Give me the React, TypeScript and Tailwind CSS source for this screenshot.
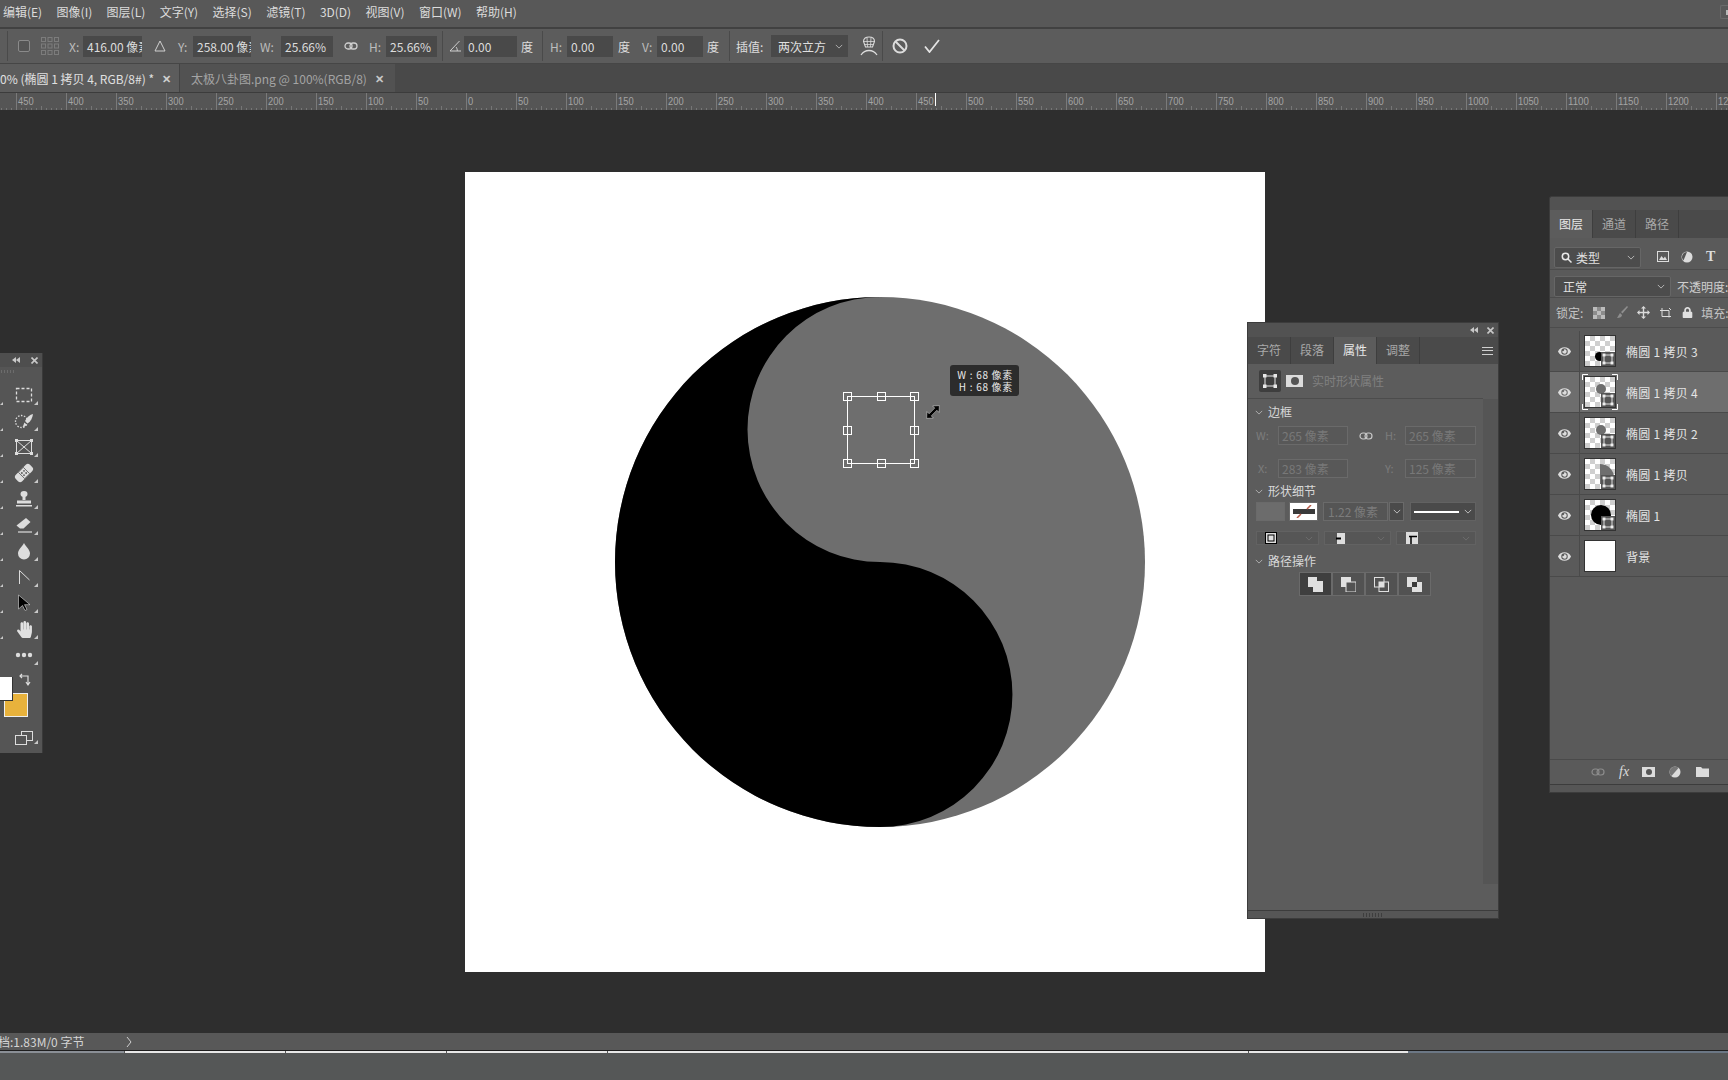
import React from "react";
import { FaEye, FaHandPaper, FaLock } from "react-icons/fa";

const menus = ["编辑(E)", "图像(I)", "图层(L)", "文字(Y)", "选择(S)", "滤镜(T)", "3D(D)", "视图(V)", "窗口(W)", "帮助(H)"];

function Chev({ className = "" }: { className?: string }) {
  return (
    <svg viewBox="0 0 10 6" className={"w-[8px] h-[5px] shrink-0 " + className} fill="none" stroke="currentColor" strokeWidth="1.2">
      <path d="M1 1l4 4 4-4" />
    </svg>
  );
}

function OptInput({ text, className }: { text: string; className: string }) {
  return (
    <div className={"h-[21px] shrink-0 bg-[#494949] text-[#dcdcdc] text-[12px] leading-[21px] pl-[4px] overflow-hidden whitespace-nowrap " + className}>
      {text}
    </div>
  );
}

function OptLabel({ text, className }: { text: string; className: string }) {
  return <div className={"shrink-0 text-[#bdbdbd] text-[12px] leading-[21px] whitespace-nowrap " + className}>{text}</div>;
}

function Sep({ className }: { className: string }) {
  return <div className={"w-px h-[30px] shrink-0 bg-[#4a4a4a] " + className} />;
}

function Ruler() {
  const minor: React.ReactNode[] = [];
  for (let x = 466 - 480; x < 1728; x += 5) {
    const d = ((x - 466) % 50 + 50) % 50;
    if (d === 0) continue;
    const h = d === 25 ? 4 : 2;
    minor.push(<line key={x} x1={x + 0.5} x2={x + 0.5} y1={17 - h} y2={17} stroke="#767676" strokeWidth="1" />);
  }
  const majors: React.ReactNode[] = [];
  for (let n = -450; n <= 1250; n += 50) {
    const x = 466 + n;
    majors.push(
      <g key={n}>
        <line x1={x + 0.5} x2={x + 0.5} y1={0} y2={17} stroke="#7a7a7a" strokeWidth="1" />
        <text x={x + 2} y={12} fontSize="10" fill="#a4a4a4" fontFamily="Liberation Sans, sans-serif" textLength={String(Math.abs(n)).length * 5.2} lengthAdjust="spacingAndGlyphs">
          {Math.abs(n)}
        </text>
      </g>
    );
  }
  return (
    <svg width="1728" height="17" className="block">
      {minor}
      {majors}
      <line x1="935.5" x2="935.5" y1="0" y2="13" stroke="#fff" strokeWidth="1" />
    </svg>
  );
}

function Tiny() {
  return <span className="absolute right-[4px] bottom-[3px] w-0 h-0 border-l-[4px] border-l-transparent border-b-[4px] border-b-[#c8c8c8]" />;
}

function LeftTiny() {
  return <span className="absolute left-0 bottom-[3px] w-0 h-0 border-l-[3px] border-l-transparent border-b-[3px] border-b-[#c8c8c8]" />;
}

const toolSvg: React.ReactNode[] = [
  <svg key="m" width="18" height="16" viewBox="0 0 18 16" fill="none" stroke="#ddd" strokeWidth="1.3" strokeDasharray="3 2"><rect x="1.5" y="1.5" width="15" height="13" /></svg>,
  <svg key="l" width="20" height="16" viewBox="0 0 20 16" fill="none"><circle cx="7.5" cy="8.5" r="6" stroke="#ddd" strokeWidth="1.3" strokeDasharray="1.5 1.5" /><path d="M19 1c-3 .5-6 3-8 7l2.500 2.500c3.500-2 5-6 5.500-9.500z" fill="#ddd" /><path d="M10.500 9.500l2 2c-.5 1.500-2 2.500-4 2.500 1-1 1-3 2-4.500z" fill="#ddd" /></svg>,
  <svg key="f" width="18" height="16" viewBox="0 0 18 16" fill="none" stroke="#ddd" strokeWidth="1"><rect x="1.500" y="1.500" width="15" height="13" /><path d="M1.500 1.500l15 13M16.500 1.500l-15 13" /><rect x="0.500" y="0.500" width="2" height="2" fill="#ddd" /><rect x="15.500" y="0.500" width="2" height="2" fill="#ddd" /><rect x="0.500" y="13.500" width="2" height="2" fill="#ddd" /><rect x="15.500" y="13.500" width="2" height="2" fill="#ddd" /></svg>,
  <svg key="b" width="20" height="20" viewBox="0 0 20 20"><g transform="rotate(-45 10 10)"><rect x="0" y="5.500" width="20" height="9" rx="3" fill="#ddd" /><rect x="6.500" y="5.500" width="7" height="9" fill="#ddd" stroke="#5a5a5a" strokeWidth="0.8" /><circle cx="8.500" cy="8.500" r="0.900" fill="#5a5a5a" /><circle cx="11.500" cy="8.500" r="0.900" fill="#5a5a5a" /><circle cx="8.500" cy="11.500" r="0.900" fill="#5a5a5a" /><circle cx="11.500" cy="11.500" r="0.900" fill="#5a5a5a" /></g></svg>,
  <svg key="s" width="18" height="18" viewBox="0 0 18 18" fill="#ddd"><ellipse cx="9" cy="4" rx="3.500" ry="3" /><rect x="7.500" y="6" width="3" height="4" /><path d="M2 10.500h14v3H2z" /><rect x="1" y="15" width="16" height="1.500" /></svg>,
  <svg key="e" width="18" height="16" viewBox="0 0 18 16"><path d="M11 1l4.500 4-7 6.500H5L1.500 8.500z" fill="#ddd" /><path d="M3 15h14" stroke="#ddd" strokeWidth="1.200" /></svg>,
  <svg key="d" width="14" height="18" viewBox="0 0 14 18"><path d="M7 1c1.500 3.500 6 6.500 6 10.500A6 6 0 0 1 1 11.500C1 7.500 5.500 4.500 7 1z" fill="#ddd" /></svg>,
  <svg key="p" width="14" height="16" viewBox="0 0 14 16" fill="none" stroke="#ddd" strokeWidth="1"><path d="M2.500 15V1.500L12.500 11" /></svg>,
  <svg key="a" width="14" height="18" viewBox="0 0 14 18"><path d="M1.500 1v14l4-3.500 2.500 5 2-1-2.500-4.800h5.500z" fill="#000" stroke="#d8d8d8" strokeWidth="0.600" /></svg>,
  <FaHandPaper key="h" size={17} color="#e0e0e0" />,
  <svg key="o" width="18" height="6" viewBox="0 0 18 6" fill="#ddd"><circle cx="3" cy="3" r="2.200" /><circle cx="9" cy="3" r="2.200" /><circle cx="15" cy="3" r="2.200" /></svg>,
];

function Thumb({ children, plain, selected }: { children?: React.ReactNode; plain?: boolean; selected?: boolean }) {
  return (
    <div className="relative w-[32px] h-[32px] shrink-0 ml-[4px]">
      <div className={"absolute inset-0 border border-[#333] overflow-hidden " + (plain ? "bg-white" : "bg-[repeating-conic-gradient(#cfcfcf_0_25%,#ffffff_0_50%)] bg-[length:10px_10px]")}>
        {children}
        {!plain && (
          <div className="absolute right-0 bottom-0 w-[14px] h-[14px] bg-[#555] flex items-center justify-center">
            <svg width="12" height="12" viewBox="0 0 12 12" fill="none" stroke="#eee" strokeWidth="0.9">
              <rect x="2" y="2" width="8" height="8" />
              <rect x="1" y="1" width="2" height="2" fill="#eee" />
              <rect x="9" y="1" width="2" height="2" fill="#eee" />
              <rect x="1" y="9" width="2" height="2" fill="#eee" />
              <rect x="9" y="9" width="2" height="2" fill="#eee" />
            </svg>
          </div>
        )}
      </div>
      {selected && (
        <svg width="36" height="36" className="absolute -left-[2px] -top-[2px]" fill="none" stroke="#fff" strokeWidth="1">
          <path d="M.5 6V.5H6M30 .5h5.500V6M35.500 30v5.500H30M6 35.500H.5V30" />
        </svg>
      )}
    </div>
  );
}

function LayerRow({ name, selected, children, plain }: { name: string; selected?: boolean; children?: React.ReactNode; plain?: boolean }) {
  return (
    <div className={"flex items-center h-[41px] border-b border-[#4a4a4a] " + (selected ? "bg-[#6e6e6e]" : "")}>
      <div className="w-[30px] h-full flex items-center justify-center border-r border-[#4a4a4a] shrink-0">
        <FaEye size={13} color="#dcdcdc" />
      </div>
      <Thumb plain={plain} selected={selected}>{children}</Thumb>
      <div className="ml-[10px] pt-[1px] text-[12px] text-[#e4e4e4] whitespace-pre tracking-[0.3px]">{name}</div>
    </div>
  );
}

function TabStrip({ tabs, active, h }: { tabs: string[]; active: number; h: string }) {
  return (
    <div className={"flex items-stretch bg-[#4a4a4a] " + h}>
      {tabs.map((t, i) => (
        <div key={t} className={"w-[43px] pb-[1px] flex items-center justify-center text-[12px] border-r border-[#3e3e3e] " + (i === active ? "bg-[#5c5c5c] text-[#e8e8e8]" : "text-[#a8a8a8]")}>
          {t}
        </div>
      ))}
    </div>
  );
}

function Section({ text, className }: { text: string; className: string }) {
  return (
    <div className={"flex items-center h-[16px] text-[12px] text-[#d8d8d8] pl-[7px] " + className}>
      <Chev className="text-[#b0b0b0]" />
      <span className="ml-[5px]">{text}</span>
    </div>
  );
}

function DisInput({ label, val, labelCls, inpCls }: { label: string; val: string; labelCls: string; inpCls: string }) {
  return (
    <>
      <div className={"text-[11px] text-[#7c7c7c] leading-[19px] shrink-0 " + labelCls}>{label}</div>
      <div className={"h-[19px] shrink-0 border border-[#6a6a6a] bg-[#585858] text-[#787878] text-[12px] leading-[17px] pl-[3px] whitespace-nowrap " + inpCls}>{val}</div>
    </>
  );
}

function MiniHeader() {
  return (
    <div className="h-[14px] bg-[#525252] flex items-center justify-end pr-[4px] gap-[9px] text-[#c8c8c8]">
      <svg width="8" height="6" viewBox="0 0 8 6" fill="currentColor"><path d="M4 0v6L0 3zM8 0v6L4 3z" /></svg>
      <svg width="7" height="7" viewBox="0 0 7 7" stroke="currentColor" strokeWidth="1.600"><path d="M.5.5l6 6M6.500.5l-6 6" /></svg>
    </div>
  );
}

function PathBtn({ mode, active }: { mode: number; active?: boolean }) {
  return (
    <div className={"w-[33px] h-[24px] border border-[#6a6a6a] flex items-center justify-center " + (active ? "bg-[#3f3f3f]" : "bg-[#525252]")}>
      <svg width="15" height="15" viewBox="0 0 15 15">
        {mode === 0 && <path d="M0 0h9v4h6v11H5v-5H0z" fill="#e0e0e0" />}
        {mode === 1 && (<><rect x="0" y="0" width="10" height="10" fill="#e0e0e0" /><rect x="5" y="5" width="10" height="10" fill="#525252" stroke="#e0e0e0" /></>)}
        {mode === 2 && (<><rect x="0.500" y="0.500" width="9.500" height="9.500" fill="none" stroke="#e0e0e0" /><rect x="5" y="5" width="9.500" height="9.500" fill="none" stroke="#e0e0e0" /><rect x="5" y="5" width="5" height="5" fill="#e0e0e0" /></>)}
        {mode === 3 && (<><path d="M0 0h10v5h5v10H5v-5H0z" fill="#e0e0e0" /><rect x="5" y="5" width="5" height="5" fill="#3a3a3a" /></>)}
      </svg>
    </div>
  );
}

function Handle({ x, y }: { x: number; y: number }) {
  return <rect x={x - 3.5} y={y - 3.5} width="8" height="8" fill="none" stroke="#fff" strokeWidth="1" />;
}

export default function App() {
  return (
    <div className="w-[1728px] h-[1080px] overflow-hidden flex flex-col bg-[#2e2e2e] font-['Noto_Sans_CJK_SC',sans-serif] select-none">
      {/* menu */}
      <div className="h-[29px] shrink-0 bg-[#585858] border-b-2 border-[#414141] flex items-center pl-[3px] pb-[3px] gap-[14.4px] text-[12px] text-[#dcdcdc] whitespace-nowrap">
        {menus.map((m) => (
          <span key={m}>{m}</span>
        ))}
        <div className="ml-auto w-[8px] h-[14px] border-l border-y border-[#6a6a6a] rounded-l-[2px] flex items-center justify-end">
          <div className="w-[2px] h-[5px] bg-[#b8b8b8]" />
        </div>
      </div>

      {/* options */}
      <div className="h-[35px] shrink-0 bg-[#5c5c5c] flex items-center border-b border-[#464646]">
        <Sep className="ml-[7px]" />
        <div className="ml-[10px] w-[12px] h-[12px] border border-[#8a8a8a] rounded-[2px] shrink-0 bg-[#555]" />
        <svg width="18" height="18" viewBox="0 0 18 18" className="ml-[11px] shrink-0" fill="none" stroke="#7c7c7c" strokeWidth="1">
          {[0, 6.5, 13].map((x) => [0, 6.5, 13].map((y) => <rect key={x + "-" + y} x={x + 0.5} y={y + 0.5} width="4" height="4" />))}
        </svg>
        <OptLabel text="X:" className="ml-[10px] w-[14px]" />
        <OptInput text="416.00 像素" className="w-[59px]" />
        <svg width="12" height="12" viewBox="0 0 12 12" className="ml-[12px] shrink-0" fill="none" stroke="#d0d0d0" strokeWidth="1"><path d="M6 1l5 10H1z" /></svg>
        <OptLabel text="Y:" className="ml-[12px] w-[15px]" />
        <OptInput text="258.00 像素" className="w-[58px]" />
        <OptLabel text="W:" className="ml-[9px] w-[21px]" />
        <OptInput text="25.66%" className="w-[52px]" />
        <svg width="14" height="10" viewBox="0 0 14 10" className="ml-[11px] shrink-0" fill="none" stroke="#d0d0d0" strokeWidth="1.300"><rect x="1" y="2" width="7" height="6" rx="3" /><rect x="6" y="2" width="7" height="6" rx="3" /></svg>
        <OptLabel text="H:" className="ml-[11px] w-[17px]" />
        <OptInput text="25.66%" className="w-[51px]" />
        <Sep className="ml-[5px]" />
        <svg width="12" height="12" viewBox="0 0 12 12" className="ml-[6px] shrink-0" fill="none" stroke="#d0d0d0" strokeWidth="1"><path d="M10.500 1L1 11h11M7 7c1 1 1.300 2.500 1.300 4" /></svg>
        <OptInput text="0.00" className="ml-[3px] w-[53px]" />
        <OptLabel text="度" className="ml-[4px] w-[14px] text-[#dcdcdc]" />
        <Sep className="ml-[7px]" />
        <OptLabel text="H:" className="ml-[7px] w-[17px]" />
        <OptInput text="0.00" className="w-[46px]" />
        <OptLabel text="度" className="ml-[5px] w-[14px] text-[#dcdcdc]" />
        <OptLabel text="V:" className="ml-[10px] w-[15px]" />
        <OptInput text="0.00" className="w-[46px]" />
        <OptLabel text="度" className="ml-[4px] w-[14px] text-[#dcdcdc]" />
        <Sep className="ml-[8px]" />
        <OptLabel text="插值:" className="ml-[6px] w-[35px] text-[#dcdcdc]" />
        <div className="w-[77px] h-[22px] shrink-0 bg-[#494949] flex items-center justify-between pl-[7px] pr-[5px] text-[12px] text-[#e0e0e0]">
          <span className="pt-[1px]">两次立方</span>
          <Chev className="text-[#b0b0b0]" />
        </div>
        <svg width="18" height="20" viewBox="0 0 18 20" className="ml-[12px] shrink-0" fill="none" stroke="#dcdcdc" strokeWidth="1.100">
          <path d="M3.500 5.500C3.500 2 6 1 9 1s5.500 1 5.500 4.500L12.500 11h-7z" />
          <path d="M3.500 5.500h11M4.500 8.500h9M7 1.500L7.500 11M11 1.500L10.500 11" strokeWidth="0.800" />
          <path d="M1 19c2-3 5-4.500 8-4.500s6 1.500 8 4.500" strokeWidth="1.300" />
        </svg>
        <Sep className="ml-[4px]" />
        <svg width="16" height="16" viewBox="0 0 16 16" className="ml-[9px] shrink-0" fill="none" stroke="#dcdcdc" strokeWidth="2"><circle cx="8" cy="8" r="6.500" /><path d="M3.500 3.500l9 9" /></svg>
        <svg width="16" height="14" viewBox="0 0 16 14" className="ml-[16px] shrink-0" fill="none" stroke="#e4e4e4" strokeWidth="1.800"><path d="M1 7.500L5.500 13 15 1" /></svg>
      </div>

      {/* tabs */}
      <div className="h-[29px] shrink-0 bg-[#494949] flex items-stretch text-[12px] whitespace-nowrap border-b border-[#3c3c3c]">
        <div className="w-[179px] bg-[#5c5c5c] flex items-center justify-end pr-[8px] pt-[1px] overflow-hidden text-[#e0e0e0]">
          <span>0% (椭圆 1 拷贝 4, RGB/8#) *</span>
          <span className="ml-[8px] text-[#cfcfcf] text-[11px] font-bold">✕</span>
        </div>
        <div className="w-[216px] bg-[#525252] flex items-center pl-[11px] pt-[1px] text-[#a4a4a4] border-l border-[#444]">
          <span>太极八卦图.png @ 100%(RGB/8)</span>
          <span className="ml-[8px] text-[#c8c8c8] text-[11px] font-bold">✕</span>
        </div>
      </div>

      {/* ruler */}
      <div className="h-[17px] shrink-0 bg-[#555555] overflow-hidden">
        <Ruler />
      </div>

      {/* workspace */}
      <div className="relative h-[923px] shrink-0 bg-[#2e2e2e]">
        <div className="relative w-[800px] h-[800px] ml-[465px] mt-[62px] bg-white">
          <svg width="800" height="800" viewBox="0 0 800 800" className="block">
            <circle cx="415" cy="390" r="265" fill="#6e6e6e" />
            <path d="M415 125A132.500 132.500 0 0 0 415 390A132.500 132.500 0 0 1 415 655A265 265 0 0 1 415 125Z" fill="#000" />
            <rect x="382.500" y="224.500" width="67" height="67" fill="none" stroke="#fff" strokeWidth="1" />
            <Handle x={382} y={224} />
            <Handle x={416} y={224} />
            <Handle x={449} y={224} />
            <Handle x={382} y={258} />
            <Handle x={449} y={258} />
            <Handle x={382} y={291} />
            <Handle x={416} y={291} />
            <Handle x={449} y={291} />
            <g transform="translate(468 240) rotate(-45)">
              <path d="M-9 0l5-4.500v3h8v-3L9 0 4 4.500v-3h-8v3z" fill="#000" stroke="#fff" strokeWidth="0.400" />
            </g>
          </svg>
          <div className="absolute left-[485px] top-[193px] w-[69px] h-[31px] rounded-[3px] bg-[#2c2c2c] text-[#e8e8e8] text-[10px] leading-[12px] flex flex-col items-end justify-center pr-[6px] whitespace-pre tracking-[0.7px]">
            <div>W : 68 像素</div>
            <div>H : 68 像素</div>
          </div>
        </div>

        {/* tool panel */}
        <div className="absolute left-0 top-[243px] w-[43px] h-[400px] bg-[#555] border-r border-[#3a3a3a] flex flex-col">
          <div className="h-[14px] bg-[#4e4e4e] flex items-center justify-end pr-[4px] gap-[11px] text-[#c8c8c8] shrink-0">
            <svg width="8" height="6" viewBox="0 0 8 6" fill="currentColor"><path d="M4 0v6L0 3zM8 0v6L4 3z" /></svg>
            <svg width="7" height="7" viewBox="0 0 7 7" stroke="currentColor" strokeWidth="1.600"><path d="M.5.5l6 6M6.500.5l-6 6" /></svg>
          </div>
          <div className="h-[15px] shrink-0 pt-[3px] pl-[1px]">
            <div className="w-[15px] h-[3px] bg-[repeating-linear-gradient(90deg,#6c6c6c_0_1px,transparent_1px_3px)]" />
          </div>
          {toolSvg.map((t, i) => (
            <div key={i} className="relative h-[26px] shrink-0 flex items-center justify-center pl-[6px]">
              {t}
              <Tiny />
              {i < 10 && <LeftTiny />}
            </div>
          ))}
          <div className="relative flex-1">
            <div className="absolute left-[4px] top-[25px] w-[24px] h-[24px] bg-[#e8b23c] border border-[#eee]" />
            <div className="absolute left-0 top-[9px] w-[13px] h-[24px] bg-white border-r border-b border-[#333]" />
            <svg width="12" height="14" viewBox="0 0 12 14" className="absolute left-[19px] top-[5px]" fill="none" stroke="#ddd" strokeWidth="1.200">
              <path d="M3 1L1 3l2 2M1 3h8v8M7 9l2 3 2-3" />
            </svg>
            <svg width="18" height="14" viewBox="0 0 18 14" className="absolute left-[15px] top-[63px]" fill="none" stroke="#ddd" strokeWidth="1">
              <rect x="6.500" y="0.500" width="11" height="9" />
              <rect x="0.500" y="4.500" width="11" height="9" fill="#555" />
            </svg>
            <span className="absolute right-[4px] bottom-[9px] w-0 h-0 border-l-[4px] border-l-transparent border-b-[4px] border-b-[#c8c8c8]" />
          </div>
        </div>

        {/* properties panel */}
        <div className="absolute left-[1247px] top-[212px] w-[252px] h-[597px] bg-[#5c5c5c] border border-[#3c3c3c] flex flex-col overflow-hidden">
          <MiniHeader />
          <div className="relative">
            <TabStrip tabs={["字符", "段落", "属性", "调整"]} active={2} h="h-[27px]" />
            <div className="absolute right-[5px] top-[10px] w-[11px] h-[8px] border-y border-[#d0d0d0] after:block after:h-px after:mt-[2px] after:bg-[#d0d0d0]" />
          </div>
          <div className="flex-1 min-h-0 flex">
            <div className="w-[235px] shrink-0 flex flex-col">
              <div className="h-[34px] shrink-0 flex items-center pl-[11px]">
                <div className="w-[22px] h-[22px] bg-[#3e3e3e] flex items-center justify-center rounded-[2px]">
                  <svg width="14" height="14" viewBox="0 0 14 14" fill="none" stroke="#e8e8e8" strokeWidth="1"><rect x="2" y="2" width="10" height="10" /><rect x="0.500" y="0.500" width="2.500" height="2.500" fill="#e8e8e8" /><rect x="11" y="0.500" width="2.500" height="2.500" fill="#e8e8e8" /><rect x="0.500" y="11" width="2.500" height="2.500" fill="#e8e8e8" /><rect x="11" y="11" width="2.500" height="2.500" fill="#e8e8e8" /></svg>
                </div>
                <div className="ml-[5px] w-[17px] h-[12px] bg-[#dcdcdc] flex items-center justify-center">
                  <div className="w-[8px] h-[8px] rounded-full bg-[#555]" />
                </div>
                <div className="ml-[9px] text-[12px] text-[#808080]">实时形状属性</div>
              </div>
              <div className="h-px shrink-0 bg-[#4c4c4c]" />
              <Section text="边框" className="mt-[5px]" />
              <div className="flex mt-[6px] h-[19px]">
                <DisInput label="W:" val="265 像素" labelCls="ml-[8px] w-[22px]" inpCls="w-[70px]" />
                <svg width="14" height="10" viewBox="0 0 14 10" className="ml-[11px] mt-[5px] shrink-0" fill="none" stroke="#c8c8c8" strokeWidth="1.200"><rect x="1" y="2" width="7" height="6" rx="3" /><rect x="6" y="2" width="7" height="6" rx="3" /></svg>
                <DisInput label="H:" val="265 像素" labelCls="ml-[12px] w-[20px]" inpCls="w-[71px]" />
              </div>
              <div className="flex mt-[14px] h-[19px]">
                <DisInput label="X:" val="283 像素" labelCls="ml-[10px] w-[20px]" inpCls="w-[70px]" />
                <DisInput label="Y:" val="125 像素" labelCls="ml-[37px] w-[20px]" inpCls="w-[71px]" />
              </div>
              <Section text="形状细节" className="mt-[5px]" />
              <div className="flex mt-[3px] h-[19px]">
                <div className="ml-[8px] w-[29px] h-[19px] border border-[#6a6a6a] bg-[#6c6c6c]" />
                <div className="ml-[4px] w-[29px] h-[19px] border border-[#6a6a6a] bg-white flex items-center justify-center">
                  <svg width="22" height="13" viewBox="0 0 22 13"><rect y="4" width="22" height="5" fill="#3a3a3a" /><path d="M14 4l4-4M4 13l4-4" stroke="#b85c4a" strokeWidth="1.500" /></svg>
                </div>
                <div className="ml-[5px] w-[65px] h-[19px] bg-[#555] border border-[#6a6a6a] text-[#7c7c7c] text-[12px] leading-[17px] pl-[4px]">1.22 像素</div>
                <div className="ml-[1px] w-[15px] h-[19px] bg-[#4a4a4a] border border-[#6a6a6a] flex items-center justify-center text-[#c0c0c0]"><Chev /></div>
                <div className="ml-[6px] w-[66px] h-[19px] bg-[#4a4a4a] border border-[#626262] flex items-center pl-[3px] pr-[3px] text-[#c0c0c0]">
                  <div className="w-[47px] h-[2px] bg-white" />
                  <Chev className="ml-[5px]" />
                </div>
              </div>
              <div className="flex mt-[10px] h-[14px]">
                <div className="ml-[8px] w-[63px] h-[14px] bg-[#565656] border border-[#626262] flex items-center pl-[8px] pr-[5px] justify-between text-[#6e6e6e]">
                  <svg width="12" height="12" viewBox="0 0 12 12" fill="none" stroke="#000" strokeWidth="1"><rect x="0.500" y="0.500" width="11" height="11" fill="#ddd" /><rect x="3" y="3" width="6" height="6" fill="#ddd" /></svg>
                  <Chev />
                </div>
                <div className="ml-[5px] w-[67px] h-[14px] bg-[#565656] border border-[#626262] flex items-center pl-[11px] pr-[5px] justify-between text-[#6e6e6e]">
                  <svg width="9" height="11" viewBox="0 0 9 11"><rect x="1" y="0" width="8" height="11" fill="#ddd" /><path d="M0 5.500h5" stroke="#000" strokeWidth="2" /></svg>
                  <Chev />
                </div>
                <div className="ml-[5px] w-[80px] h-[14px] bg-[#565656] border border-[#626262] flex items-center pl-[9px] pr-[5px] justify-between text-[#6e6e6e]">
                  <svg width="12" height="12" viewBox="0 0 12 12"><rect width="12" height="12" fill="#ddd" /><path d="M3 4.500h8M5 4.500V12" stroke="#000" strokeWidth="1.500" /></svg>
                  <Chev />
                </div>
              </div>
              <Section text="路径操作" className="mt-[8px]" />
              <div className="flex mt-[3px] ml-[51px]">
                <PathBtn mode={0} active />
                <PathBtn mode={1} />
                <PathBtn mode={2} />
                <PathBtn mode={3} />
              </div>
            </div>
            <div className="w-[15px] shrink-0 mt-[35px] mb-[26px] bg-[#555555]" />
          </div>
          <div className="h-[8px] shrink-0 bg-[#565656] border-t border-[#3c3c3c] flex justify-center items-center">
            <div className="w-[20px] h-[4px] bg-[repeating-linear-gradient(90deg,#3e3e3e_0_1px,transparent_1px_3px)]" />
          </div>
        </div>

        {/* layers panel */}
        <div className="absolute left-[1549px] top-[86px] w-[179px] h-[597px] bg-[#5a5a5a] border-l border-t border-b border-[#3c3c3c] rounded-tl-[3px] flex flex-col overflow-hidden">
          <div className="h-[13px] shrink-0 bg-[#525252]" />
          <TabStrip tabs={["图层", "通道", "路径"]} active={0} h="h-[28px] shrink-0" />
          <div className="h-[32px] shrink-0 flex items-start pt-[9px] pl-[4px] border-b border-[#4c4c4c] relative">
            <div className="w-[87px] h-[21px] rounded-[2px] bg-[#4c4c4c] border border-[#666] flex items-center pl-[6px] pr-[5px] text-[12px] text-[#e0e0e0]">
              <svg width="11" height="11" viewBox="0 0 11 11" fill="none" stroke="#e8e8e8" strokeWidth="1.500"><circle cx="4.500" cy="4.500" r="3.200" /><path d="M7 7l3.500 3.500" /></svg>
              <span className="ml-[4px] flex-1">类型</span>
              <Chev className="text-[#b8b8b8]" />
            </div>
            <svg width="12" height="11" viewBox="0 0 12 11" className="ml-[16px] mt-[4px] shrink-0"><rect x="0.500" y="0.500" width="11" height="10" fill="none" stroke="#dcdcdc" /><path d="M2 9l2.500-4 2 2.500 1.500-2L10 9z" fill="#dcdcdc" /></svg>
            <svg width="12" height="12" viewBox="0 0 12 12" className="ml-[12px] mt-[4px] shrink-0"><circle cx="6" cy="6" r="5.500" fill="#dcdcdc" /><path d="M6 1a5 5 0 0 0-3.500 8.500z" fill="#555" /></svg>
            <span className="ml-[13px] mt-[1px] font-['Liberation_Serif',serif] font-bold text-[14px] leading-[18px] text-[#dcdcdc]">T</span>
          </div>
          <div className="h-[28px] shrink-0 flex items-start pt-[6px] pl-[4px] border-b border-[#4c4c4c] whitespace-nowrap">
            <div className="w-[117px] h-[21px] shrink-0 rounded-[2px] bg-[#4c4c4c] border border-[#666] flex items-center pl-[8px] pr-[5px] justify-between text-[12px] text-[#e0e0e0]">
              <span>正常</span>
              <Chev className="text-[#b8b8b8]" />
            </div>
            <span className="ml-[6px] text-[12px] leading-[21px] text-[#cfcfcf]">不透明度:</span>
          </div>
          <div className="h-[30px] shrink-0 flex items-center pl-[6px] text-[12px] text-[#c4c4c4] whitespace-nowrap border-b border-[#4c4c4c]">
            <span>锁定:</span>
            <svg width="12" height="12" viewBox="0 0 12 12" className="ml-[10px] shrink-0"><rect width="12" height="12" fill="#8c8c8c" /><rect x="0" y="0" width="4" height="4" fill="#bcbcbc" /><rect x="8" y="0" width="4" height="4" fill="#bcbcbc" /><rect x="4" y="4" width="4" height="4" fill="#bcbcbc" /><rect x="0" y="8" width="4" height="4" fill="#bcbcbc" /><rect x="8" y="8" width="4" height="4" fill="#bcbcbc" /></svg>
            <svg width="12" height="13" viewBox="0 0 12 13" className="ml-[11px] shrink-0"><path d="M11 0L5 6l1.500 1.500L12 1zM4 7L1 12c3 0 5-1 5-3z" fill="#8e8e8e" /></svg>
            <svg width="13" height="13" viewBox="0 0 13 13" className="ml-[9px] shrink-0" fill="#dcdcdc"><path d="M6.500 0L9 2.500H7.200v3.300h3.300V4L13 6.500 10.500 9V7.200H7.200v3.300H9L6.500 13 4 10.500h1.800V7.200H2.500V9L0 6.500 2.500 4v1.800h3.300V2.500H4z" /></svg>
            <svg width="13" height="12" viewBox="0 0 13 12" className="ml-[9px] shrink-0" fill="none" stroke="#dcdcdc"><path d="M1 3.500h9v7M3 1v8.500h9" /><path d="M10 1L12 3" /></svg>
            <span className="ml-[10px] shrink-0"><FaLock size={11} color="#e0e0e0" /></span>
            <span className="ml-[8px]">填充:</span>
          </div>
          <div className="shrink-0 mt-[3px]">
            <LayerRow name="椭圆 1 拷贝 3">
              <div className="absolute left-[10px] top-[16px] w-[9px] h-[9px] rounded-full bg-black" />
            </LayerRow>
            <LayerRow name="椭圆 1 拷贝 4" selected>
              <div className="absolute left-[11px] top-[7px] w-[10px] h-[10px] rounded-full bg-[#6e6e6e]" />
            </LayerRow>
            <LayerRow name="椭圆 1 拷贝 2">
              <div className="absolute left-[11px] top-[7px] w-[10px] h-[10px] rounded-full bg-[#6e6e6e]" />
            </LayerRow>
            <LayerRow name="椭圆 1 拷贝">
              <div className="absolute left-[15px] top-[5px] w-[14px] h-[20px] rounded-tr-[14px] bg-[#6e6e6e]" />
            </LayerRow>
            <LayerRow name="椭圆 1">
              <div className="absolute left-[6px] top-[5px] w-[20px] h-[20px] rounded-full bg-black" />
            </LayerRow>
            <LayerRow name="背景" plain />
          </div>
          <div className="flex-1" />
          <div className="h-[25px] shrink-0 border-t border-[#4a4a4a] flex items-center pl-[41px] text-[#dcdcdc]">
            <svg width="14" height="10" viewBox="0 0 14 10" className="shrink-0" fill="none" stroke="#8c8c8c" strokeWidth="1.200"><rect x="1" y="2" width="7" height="6" rx="3" /><rect x="6" y="2" width="7" height="6" rx="3" /></svg>
            <span className="ml-[14px] w-[14px] font-['Liberation_Serif',serif] italic text-[14px] leading-[14px]">fx</span>
            <div className="ml-[9px] w-[13px] h-[10px] bg-[#dcdcdc] flex items-center justify-center shrink-0"><div className="w-[6px] h-[6px] rounded-full bg-[#555]" /></div>
            <svg width="12" height="12" viewBox="0 0 12 12" className="ml-[14px] shrink-0"><circle cx="6" cy="6" r="5.500" fill="#dcdcdc" /><path d="M9.500 2L2.500 10a5 5 0 0 1 0-8 5 5 0 0 1 7 0z" fill="#777" /></svg>
            <svg width="13" height="10" viewBox="0 0 13 10" className="ml-[15px] shrink-0" fill="#dcdcdc"><path d="M0 0h5l1.500 1.500H13V10H0z" /></svg>
          </div>
          <div className="h-[8px] shrink-0 bg-[#565656] border-t border-[#3c3c3c]" />
        </div>
      </div>

      {/* status */}
      <div className="h-[17px] shrink-0 bg-[#585858] relative flex items-center text-[12px] text-[#d4d4d4] whitespace-nowrap overflow-hidden">
        <span className="-ml-[14px]">文档:1.83M/0 字节</span>
        <svg width="6" height="10" viewBox="0 0 6 10" className="absolute left-[126px] top-[4px]" fill="none" stroke="#cfcfcf"><path d="M1 0l4 5-4 5" /></svg>
      </div>

      {/* doc strip */}
      <div className="h-[3px] shrink-0 flex bg-[#1e1e1e]">
        <div className="w-[124px] mt-[1px] bg-[#8a8f96]" />
        <div className="w-[161px] mt-[1px] bg-[#e8e8e8] border-l border-[#555]" />
        <div className="w-[161px] mt-[1px] bg-[#e8e8e8] border-l border-[#555]" />
        <div className="w-[161px] mt-[1px] bg-[#e8e8e8] border-l border-[#555]" />
        <div className="w-[641px] mt-[1px] bg-[#e8e8e8] border-l border-[#555]" />
        <div className="w-[160px] mt-[1px] bg-[#e8e8e8] border-l border-[#555]" />
        <div className="flex-1 mt-[1px] bg-[#6b7785]" />
      </div>

      {/* bottom */}
      <div className="h-[27px] shrink-0 bg-[#555757]" />
    </div>
  );
}
